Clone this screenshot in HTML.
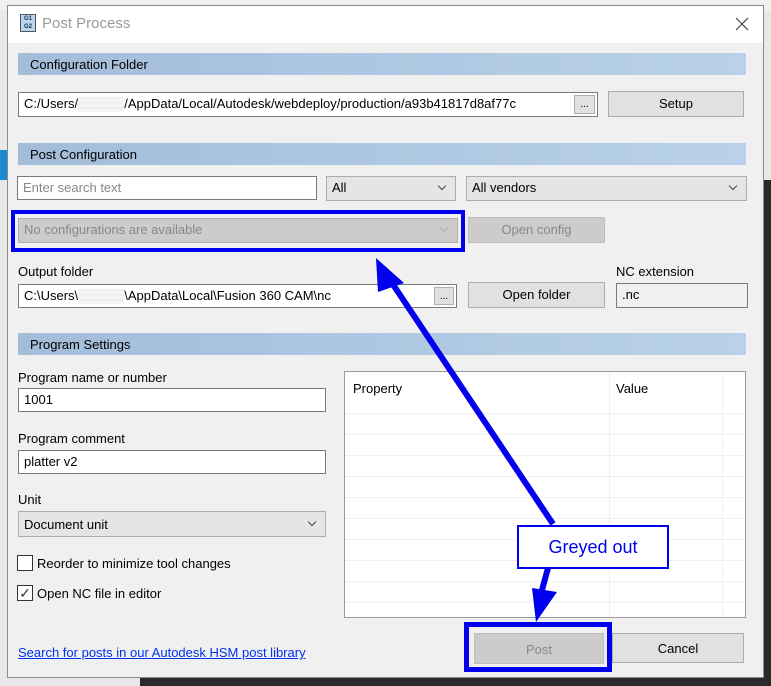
<!DOCTYPE html>
<html><head><style>
*{box-sizing:border-box;margin:0;padding:0}
body{width:771px;height:686px;overflow:hidden;background:#e8e8e8;font-family:"Liberation Sans",sans-serif;font-size:13px;color:#000;position:relative}
.a{position:absolute}
.hdr{position:absolute;left:18px;width:728px;height:22px;background:linear-gradient(90deg,#a3bdd9,#b9d1ea);padding:4px 12px;font-size:13px}
.inp{position:absolute;background:#fff;border:1px solid #7a7a7a;padding:3px 5px;white-space:nowrap;overflow:hidden}
.btn{position:absolute;background:#e1e1e1;border:1px solid #adadad;text-align:center;padding-top:4px}
.sel{position:absolute;background:#e5e5e5;border:1px solid #adadad;padding:3px 5px}
.chev{position:absolute;right:10px;top:6px;width:6px;height:6px;border-right:1px solid #444;border-bottom:1px solid #444;transform:rotate(45deg)}
.lbl{position:absolute;font-size:13px}
.cb{position:absolute;width:16px;height:16px;border:1px solid #333;background:#fff}
</style></head><body>
<div class="a" style="left:0;top:0;width:771px;height:10px;background:#f0f0f0"></div>
<div class="a" style="left:763px;top:180px;width:8px;height:506px;background:#2a2a2a"></div>
<div class="a" style="left:140px;top:677px;width:631px;height:9px;background:#2a2a2a"></div>
<div class="a" style="left:0;top:150px;width:7px;height:30px;background:#1a8ad4"></div>
<div class="a" style="left:7px;top:5px;width:757px;height:673px;background:#f0f0f0;border:1px solid #8a8a8a"></div>
<div class="a" style="left:8px;top:6px;width:755px;height:37px;background:#fff"></div>
<div class="a" style="left:20px;top:14px;width:16px;height:18px;background:#bcd3ec;border:1px solid #556;font-size:6px;line-height:8px;color:#135;text-align:center;font-weight:bold">G1<br>G2</div>
<div class="lbl" style="left:42px;top:15px;font-size:15px;color:#999">Post Process</div>
<svg class="a" style="left:735px;top:17px" width="14" height="14"><path d="M1 1L13 13M13 1L1 13" stroke="#444" stroke-width="1.2"/></svg>

<div class="hdr" style="top:53px">Configuration Folder</div>
<div class="inp" style="left:18px;top:92px;width:580px;height:25px">C:/Users/<span style="color:#ccc">▒▒▒▒▒</span>/AppData/Local/Autodesk/webdeploy/production/a93b41817d8af77c</div>
<div class="btn" style="left:574px;top:95px;width:21px;height:19px;font-size:10px;padding-top:3px">...</div>
<div class="btn" style="left:608px;top:91px;width:136px;height:26px">Setup</div>

<div class="hdr" style="top:143px">Post Configuration</div>
<div class="inp" style="left:17px;top:176px;width:300px;height:24px;color:#888">Enter search text</div>
<div class="sel" style="left:326px;top:176px;width:130px;height:25px">All<div class="chev"></div></div>
<div class="sel" style="left:466px;top:176px;width:281px;height:25px">All vendors<div class="chev"></div></div>
<div class="sel" style="left:18px;top:218px;width:440px;height:25px;background:#cccccc;color:#888">No configurations are available<div class="chev" style="border-color:#aaa"></div></div>
<div class="btn" style="left:468px;top:217px;width:137px;height:26px;background:#cccccc;border-color:#bfbfbf;color:#888">Open config</div>
<div class="a" style="left:11px;top:210px;width:454px;height:42px;border:4px solid #0000ee"></div>

<div class="lbl" style="left:18px;top:264px">Output folder</div>
<div class="lbl" style="left:616px;top:264px">NC extension</div>
<div class="inp" style="left:18px;top:284px;width:439px;height:24px">C:\Users\<span style="color:#ccc">▒▒▒▒▒</span>\AppData\Local\Fusion 360 CAM\nc</div>
<div class="btn" style="left:434px;top:287px;width:20px;height:18px;font-size:10px;padding-top:3px">...</div>
<div class="btn" style="left:468px;top:282px;width:137px;height:26px">Open folder</div>
<div class="inp" style="left:616px;top:283px;width:132px;height:25px;background:#f0f0f0">.nc</div>

<div class="hdr" style="top:333px">Program Settings</div>
<div class="lbl" style="left:18px;top:370px">Program name or number</div>
<div class="inp" style="left:18px;top:388px;width:308px;height:24px">1001</div>
<div class="lbl" style="left:18px;top:431px">Program comment</div>
<div class="inp" style="left:18px;top:450px;width:308px;height:24px">platter v2</div>
<div class="lbl" style="left:18px;top:492px">Unit</div>
<div class="sel" style="left:18px;top:511px;width:308px;height:26px;padding-top:5px">Document unit<div class="chev" style="top:7px"></div></div>
<div class="cb" style="left:17px;top:555px"></div>
<div class="lbl" style="left:37px;top:556px">Reorder to minimize tool changes</div>
<div class="cb" style="left:17px;top:585px;font-size:14px;line-height:14px;text-align:center;color:#333">✓</div>
<div class="lbl" style="left:37px;top:586px">Open NC file in editor</div>
<div class="lbl" style="left:18px;top:645px;color:#0033ee;text-decoration:underline">Search for posts in our Autodesk HSM post library</div>

<div class="a" style="left:344px;top:371px;width:402px;height:247px;background:#fff;border:1px solid #999;
background-image:repeating-linear-gradient(180deg,transparent 0 20px,#f0f0f0 20px 21px);background-position:0 21px"></div>
<div class="a" style="left:345px;top:372px;width:400px;height:32px;background:#fff"></div>
<div class="a" style="left:609px;top:372px;width:1px;height:244px;background:#eee"></div>
<div class="a" style="left:722px;top:372px;width:1px;height:244px;background:#f2f2f2"></div>
<div class="lbl" style="left:353px;top:381px">Property</div>
<div class="lbl" style="left:616px;top:381px">Value</div>

<div class="btn" style="left:474px;top:633px;width:130px;height:31px;background:#cccccc;border-color:#bfbfbf;color:#888;padding-top:8px">Post</div>
<div class="btn" style="left:612px;top:633px;width:132px;height:30px;padding-top:7px">Cancel</div>
<div class="a" style="left:464px;top:622px;width:148px;height:50px;border:5px solid #0000ee"></div>

<svg class="a" style="left:0;top:0" width="771" height="686">
<line x1="553" y1="524" x2="390" y2="280" stroke="#0000ee" stroke-width="6"/>
<polygon points="376,258 404,283 378,292" fill="#0000ee"/>
<line x1="548" y1="568" x2="542" y2="590" stroke="#0000ee" stroke-width="6"/>
<polygon points="532,588 557,592 536,622" fill="#0000ee"/>
</svg>
<div class="a" style="left:517px;top:525px;width:152px;height:44px;background:#fff;border:2px solid #0000ee;color:#0000ee;font-size:18px;text-align:center;padding-top:10px">Greyed out</div>
</body></html>
